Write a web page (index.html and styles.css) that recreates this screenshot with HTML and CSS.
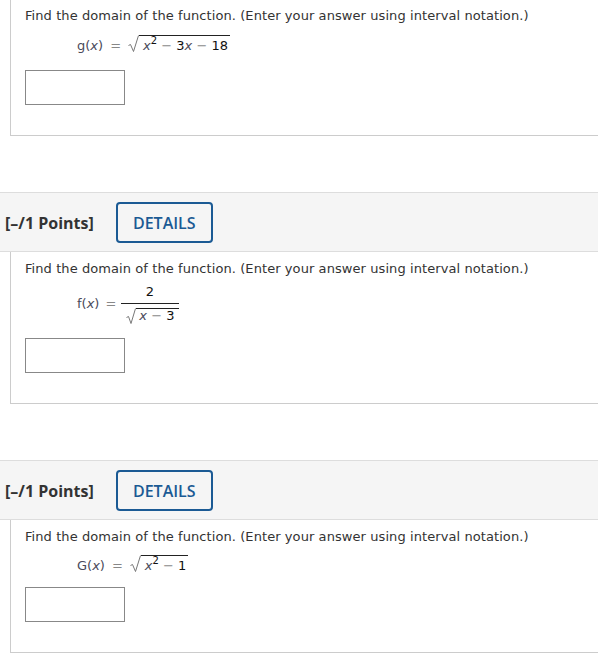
FILE: index.html
```html
<!DOCTYPE html>
<html>
<head>
<meta charset="utf-8">
<link rel="stylesheet" href="styles.css">
</head>
<body>
<div class="question first">
  <p class="prompt">Find the domain of the function. (Enter your answer using interval notation.)</p>
  <div class="math">
    <span class="v">g</span><span class="v">(</span><i class="v">x</i><span class="v">)</span>
    <span class="op eq">=</span>
    <span class="sqrt"><svg class="radical" width="11" height="18" viewBox="0 0 11 18"><path d="M0.5 10.5 L2.5 9.5 L5.5 16.5 L10.5 0.5" fill="none" stroke="#777" stroke-width="1"/></svg><span class="rad"><i class="v">x</i><sup class="num">2</sup> <span class="op">−</span> <span class="num">3</span><i class="v">x</i> <span class="op">−</span> <span class="num">18</span></span></span>
  </div>
  <div class="answer"></div>
</div>

<div class="qhead">
  <span class="points">[–/1 Points]</span>
  <span class="details">DETAILS</span>
</div>
<div class="question">
  <p class="prompt">Find the domain of the function. (Enter your answer using interval notation.)</p>
  <div class="math frac-line">
    <span class="fname"><span class="v">f</span><span class="v">(</span><i class="v">x</i><span class="v">)</span></span>
    <span class="op eq">=</span>
    <span class="frac">
      <span class="numer num">2</span>
      <span class="denom"><span class="sqrt"><svg class="radical" width="10" height="16" viewBox="0 0 10 16"><path d="M0.5 9.5 L2.5 8.5 L5 15.5 L9.5 0.5" fill="none" stroke="#777" stroke-width="1"/></svg><span class="rad"><i class="v">x</i> <span class="op">−</span> <span class="num">3</span></span></span></span>
    </span>
  </div>
  <div class="answer"></div>
</div>

<div class="qhead">
  <span class="points">[–/1 Points]</span>
  <span class="details">DETAILS</span>
</div>
<div class="question compact">
  <p class="prompt">Find the domain of the function. (Enter your answer using interval notation.)</p>
  <div class="math">
    <span class="v">G</span><span class="v">(</span><i class="v">x</i><span class="v">)</span>
    <span class="op eq">=</span>
    <span class="sqrt"><svg class="radical" width="11" height="18" viewBox="0 0 11 18"><path d="M0.5 10.5 L2.5 9.5 L5.5 16.5 L10.5 0.5" fill="none" stroke="#777" stroke-width="1"/></svg><span class="rad"><i class="v">x</i><sup class="num">2</sup> <span class="op">−</span> <span class="num">1</span></span></span>
  </div>
  <div class="answer"></div>
</div>
</body>
</html>
```
FILE: styles.css
```css
html, body {
  margin: 0;
  padding: 0;
  background: #fff;
}
body {
  font-family: "DejaVu Sans", Verdana, sans-serif;
  font-size: 13px;
  color: #333;
  width: 598px;
  overflow: hidden;
}
.question {
  margin-left: 10px;
  border-left: 1px solid #ccc;
  border-bottom: 1px solid #ccc;
  padding: 9px 0 30px 14px;
}
.question.first {
  margin-top: -1px;
}
.prompt {
  margin: 0;
  line-height: 16px;
  white-space: nowrap;
  letter-spacing: 0.08px;
}
.math {
  margin: 10px 0 0 52px;
  height: 20px;
  display: flex;
  align-items: flex-end;
  line-height: 16px;
  white-space: pre;
}
.compact .math {
  margin-top: 9px;
}
.v {
  color: #4a4a5a;
}
i.v {
  font-style: italic;
}
.num {
  color: #111;
}
.op {
  color: #888;
}
.eq {
  margin: 0 7px;
}
.sqrt {
  display: inline-flex;
  align-items: flex-start;
}
.radical {
  display: block;
}
.rad {
  border-top: 1px solid #222;
  padding: 2px 2px 0 4px;
  line-height: 16px;
  white-space: pre;
}
sup {
  font-size: 10px;
  line-height: 0;
  vertical-align: 6px;
}
.answer {
  width: 98px;
  height: 33px;
  border: 1px solid #888;
  margin-top: 16px;
  background: #fff;
}
.compact .answer {
  margin-top: 13px;
}
.frac-line {
  height: auto;
  align-items: center;
  margin-top: 7px;
}
.frac-line .eq {
  margin: 0 5px 0 6px;
}
.frac {
  display: inline-flex;
  flex-direction: column;
  align-items: center;
}
.numer {
  line-height: 15px;
  padding: 0 0 4px;
}
.denom {
  display: flex;
  border-top: 1px solid #222;
  padding: 4px 0 0 5px;
}
.frac .rad {
  line-height: 14px;
  padding: 0 4px 0 3px;
}
.frac-line + .answer {
  margin-top: 14px;
}
.qhead {
  margin-top: 56px;
  background: #f5f5f5;
  border-top: 1px solid #ddd;
  border-bottom: 1px solid #ddd;
  padding: 9px 0 8px 5px;
  display: flex;
  align-items: center;
  gap: 22px;
  font-family: "Open Sans", sans-serif;
  font-size: 16px;
}
.points {
  font-weight: 700;
  color: #333;
}
.details {
  box-sizing: border-box;
  width: 97px;
  height: 41px;
  border: 2px solid #1b5a94;
  border-radius: 4px;
  color: #1b5a94;
  font-weight: 600;
  display: flex;
  align-items: center;
  justify-content: center;
}
```
